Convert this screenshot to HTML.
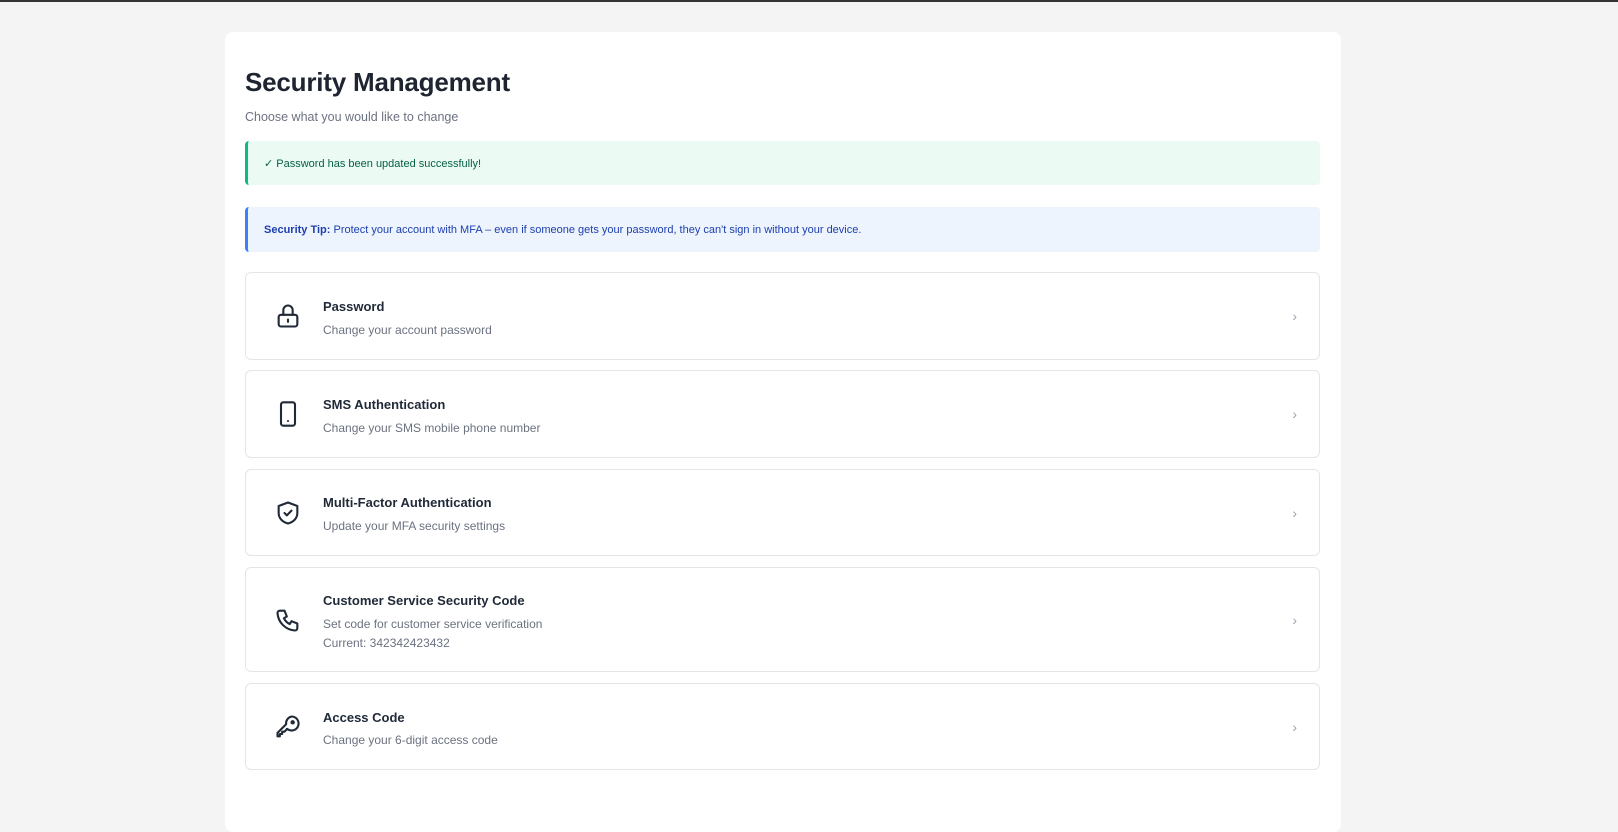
<!DOCTYPE html>
<html><head><style>
*{box-sizing:border-box;margin:0;padding:0}
body{width:1618px;height:804px;background:#f4f4f4;font-family:"Liberation Sans",sans-serif;border-top:2px solid #333;overflow:hidden;position:relative}
.card{position:absolute;left:225px;top:30px;width:1116px;height:800px;background:#fff;border-radius:8px;padding:0 20px}
h1{position:absolute;left:20px;top:35px;font-size:26px;font-weight:bold;color:#1e2430;letter-spacing:-0.2px}
.sub{position:absolute;left:20px;top:78px;font-size:12.5px;color:#6b7280}
.alert{position:absolute;left:20px;width:1075px;border-radius:4px;font-size:11px;padding-left:16px;display:flex;align-items:center}
.ok{top:109px;height:44px;background:#ebfbf3;border-left:3px solid #10b981;color:#065f46}
.tip{top:175px;height:45px;background:#edf4fe;border-left:3px solid #3b82f6;color:#1e40af}
.item{position:absolute;left:20px;width:1075px;border:1px solid #e3e5e8;border-radius:6px}
.item svg{position:absolute;left:28px;top:50%;margin-top:-14px}
.t{position:absolute;left:77px;font-size:13px;font-weight:bold;color:#1f2937}
.d{position:absolute;left:77px;font-size:12px;color:#6b7280}
.ch{position:absolute;right:22px;top:50%;margin-top:-8px;color:#9ca3af;font-size:14px}
</style></head><body>
<div class="card">
<h1>Security Management</h1>
<div class="sub">Choose what you would like to change</div>
<div class="alert ok">✓ Password has been updated successfully!</div>
<div class="alert tip"><b>Security Tip:</b>&nbsp;Protect your account with MFA – even if someone gets your password, they can't sign in without your device.</div>

<div class="item" style="top:240px;height:88px">
<svg width="28" height="28" viewBox="0 0 24 24" fill="none" stroke="#1f2937" stroke-width="1.8" stroke-linecap="round"><rect x="4" y="11" width="16" height="10" rx="2"/><path d="M8 11V7a4 4 0 0 1 8 0v4"/><path d="M12 15v2"/></svg>
<div class="t" style="top:26px">Password</div><div class="d" style="top:50px">Change your account password</div><div class="ch">›</div></div>

<div class="item" style="top:338px;height:88px">
<svg width="28" height="28" viewBox="0 0 24 24" fill="none" stroke="#1f2937" stroke-width="1.8" stroke-linecap="round"><rect x="6" y="2" width="12" height="20" rx="2"/><path d="M12 18h.01"/></svg>
<div class="t" style="top:26px">SMS Authentication</div><div class="d" style="top:50px">Change your SMS mobile phone number</div><div class="ch">›</div></div>

<div class="item" style="top:437px;height:87px">
<svg width="28" height="28" viewBox="0 0 24 24" fill="none" stroke="#1f2937" stroke-width="1.8" stroke-linecap="round" stroke-linejoin="round"><path d="M12 3l8 3v6c0 5-4 8-8 9-4-1-8-4-8-9V6z"/><path d="M9 12l2 2 4-4"/></svg>
<div class="t" style="top:25px">Multi-Factor Authentication</div><div class="d" style="top:49px">Update your MFA security settings</div><div class="ch">›</div></div>

<div class="item" style="top:535px;height:105px">
<svg width="28" height="28" viewBox="0 0 24 24" fill="none" stroke="#1f2937" stroke-width="1.8" stroke-linecap="round" stroke-linejoin="round"><path d="M5 4h4l2 5-2.5 1.5a11 11 0 0 0 5 5L15 13l5 2v4a2 2 0 0 1-2 2A16 16 0 0 1 3 6a2 2 0 0 1 2-2"/></svg>
<div class="t" style="top:25px">Customer Service Security Code</div><div class="d" style="top:49px">Set code for customer service verification</div><div class="d" style="top:68px">Current: 342342423432</div><div class="ch">›</div></div>

<div class="item" style="top:651px;height:87px">
<svg width="28" height="28" viewBox="0 0 24 24" fill="none" stroke="#1f2937" stroke-width="1.8" stroke-linecap="round" stroke-linejoin="round"><path d="M15 3a6 6 0 1 1-3.8 10.6L9 16H7v2H5v2H3v-3l7.4-7.4A6 6 0 0 1 15 3z"/><circle cx="16" cy="8" r="1"/></svg>
<div class="t" style="top:26px">Access Code</div><div class="d" style="top:49px">Change your 6-digit access code</div><div class="ch">›</div></div>
</div>
</body></html>
